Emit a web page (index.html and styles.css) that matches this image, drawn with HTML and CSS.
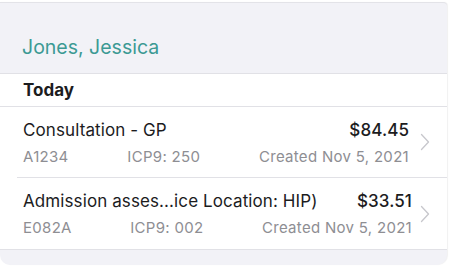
FILE: index.html
```html
<!DOCTYPE html>
<html>
<head>
<meta charset="utf-8">
<link rel="stylesheet" href="styles.css">
</head>
<body>
<div class="panel">
  <div class="header"><span class="name">Jones, Jessica</span></div>
  <div class="section">Today</div>
  <div class="list">
    <div class="item">
      <div class="content">
        <div class="line1"><span class="title">Consultation - GP</span><span class="price">$84.45</span></div>
        <div class="line2"><span>A1234</span><span>ICP9: 250</span><span>Created Nov 5, 2021</span></div>
      </div>
      <svg class="chev" width="10" height="18" viewBox="0 0 10 18"><path d="M1.5 1.5 L8.5 9 L1.5 16.5" fill="none" stroke="#c7c7cc" stroke-width="1.3" stroke-linecap="round" stroke-linejoin="round"/></svg>
    </div>
    <div class="item">
      <div class="content">
        <div class="line1"><span class="title">Admission asses...ice Location: HIP)</span><span class="price">$33.51</span></div>
        <div class="line2"><span>E082A</span><span>ICP9: 002</span><span>Created Nov 5, 2021</span></div>
      </div>
      <svg class="chev" width="10" height="18" viewBox="0 0 10 18"><path d="M1.5 1.5 L8.5 9 L1.5 16.5" fill="none" stroke="#c7c7cc" stroke-width="1.3" stroke-linecap="round" stroke-linejoin="round"/></svg>
    </div>
  </div>
  <div class="footer"></div>
</div>
</body>
</html>
```
FILE: styles.css
```css
html, body {
  margin: 0;
  padding: 0;
  background: #ffffff;
}
body {
  font-family: Inter, "Noto Sans", "Liberation Sans", sans-serif;
  color: #1c1c1e;
  width: 449px;
  height: 269px;
  overflow: hidden;
}
.panel {
  margin: 2px 2px 0 0;
  background: #f2f2f7;
  border-top: 1px solid #e3e3e8;
  border-radius: 0 4px 10px 10px;
  box-shadow: 1px 0 1px rgba(0,0,0,0.06);
  overflow: hidden;
}
.header {
  height: 71px;
  box-sizing: border-box;
  padding: 32px 0 0 22px;
  border-bottom: 1px solid #e1e1e6;
}
.name {
  font-size: 19.5px;
  color: #3c9a94;
  line-height: 24px;
}
.section {
  background: #fff;
  height: 33px;
  box-sizing: border-box;
  padding: 5px 0 0 23px;
  font-size: 17px;
  font-weight: 700;
  line-height: 22px;
  border-bottom: 1px solid #e1e1e6;
}
.list {
  background: #fff;
  padding-left: 17px;
  border-bottom: 1px solid #e1e1e6;
}
.item {
  display: flex;
  align-items: center;
  height: 70px;
  box-sizing: border-box;
  padding-right: 17px;
}
.item + .item {
  border-top: 1px solid #e1e1e6;
  height: 72px;
}
.content {
  flex: 1;
  align-self: flex-start;
  padding: 12px 11px 0 6px;
}
.item + .item .content {
  padding-right: 8px;
}
.line1 {
  display: flex;
  justify-content: space-between;
  font-size: 17px;
  letter-spacing: 0.1px;
  line-height: 22px;
  color: #1c1c1e;
}
.price {
  font-weight: 500;
}
.line2 {
  display: flex;
  justify-content: space-between;
  margin-top: 6px;
  font-size: 15px;
  letter-spacing: 0.3px;
  line-height: 20px;
  color: #8e8e93;
}
.chev {
  display: block;
  flex: none;
}
.footer {
  height: 15px;
}
```
